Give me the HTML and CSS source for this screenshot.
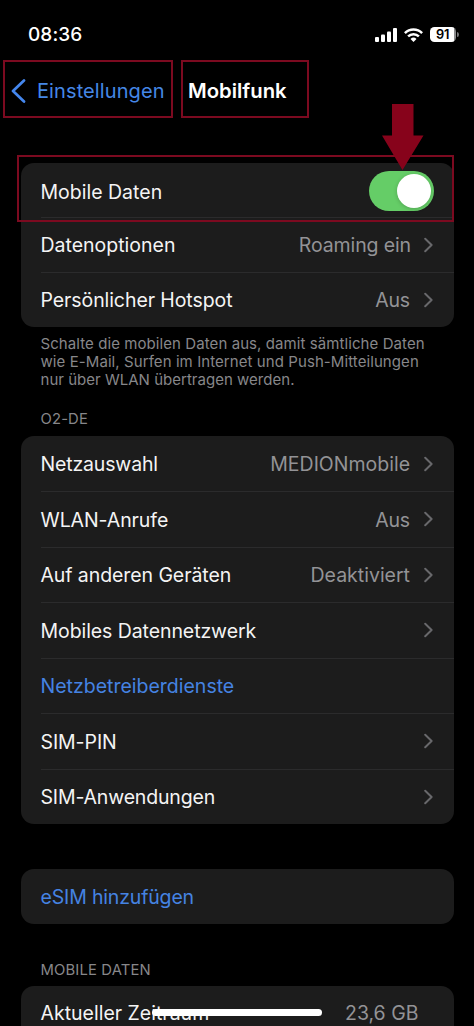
FILE: index.html
```html
<!DOCTYPE html>
<html lang="de">
<head>
<meta charset="utf-8">
<title>Mobilfunk</title>
<link rel="stylesheet" href="styles.css">
</head>
<body>
<svg class="defs" aria-hidden="true"><symbol id="chevron" viewBox="0 0 10 16"><path d="M1.200 1.800 7.600 8l-6.400 6.200" fill="none" stroke="#68686b" stroke-width="2" stroke-linecap="round" stroke-linejoin="round"/></symbol></svg>
<main class="phone">
  <header class="status">
    <span class="clock">08:36</span>
    <span class="status-icons">
      <svg class="signal" viewBox="0 0 22 14"><g fill="#fff"><rect x="0" y="9" width="4" height="5" rx="1"/><rect x="6" y="6.500" width="4" height="7.500" rx="1"/><rect x="12" y="3.500" width="4" height="10.500" rx="1"/><rect x="18" y="0" width="4" height="14" rx="1"/></g></svg>
      <svg class="wifi" viewBox="0 0 19 14"><g fill="none" stroke="#fff" stroke-width="2.500"><path d="M.9 5.100a12.200 12.200 0 0 1 17.200 0"/><path d="M4.100 8.400a7.700 7.700 0 0 1 10.800 0"/></g><path d="M6.500 10.900a4.300 4.300 0 0 1 6 0l-3 3.100z" fill="#fff"/></svg>
      <span class="battery"><span class="level">91</span><svg class="cap" viewBox="0 0 2 5"><path d="M0 0a2 2.500 0 0 1 0 5z" fill="#77777a"/></svg></span>
    </span>
  </header>
  <nav class="nav">
    <a class="mark back"><svg class="back-icon" viewBox="0 0 15 24"><path d="M13 1.500 2 12l11 10.500" fill="none" stroke="#4587ee" stroke-width="2.700" stroke-linecap="round" stroke-linejoin="round"/></svg><span>Einstellungen</span></a>
    <h1 class="mark title">Mobilfunk</h1>
  </nav>

  <section class="card first">
    <div class="row toggle"><span>Mobile Daten</span><span class="switch"><span class="knob"></span></span></div>
    <div class="row"><span>Datenoptionen</span><span class="value roaming">Roaming ein</span><svg class="chev"><use href="#chevron"/></svg></div>
    <div class="row"><span class="snug">Persönlicher Hotspot</span><span class="value off">Aus</span><svg class="chev"><use href="#chevron"/></svg></div>
    <div class="mark focus"></div>
    <svg class="arrow" viewBox="0 0 42 66"><path d="M10 0h21.500v31.500H41.500L20.500 66 0 31.500h10z" fill="#87031b"/></svg>
  </section>
  <p class="note">Schalte die mobilen Daten aus, damit sämtliche Daten<br>wie E-Mail, Surfen im Internet und Push-Mitteilungen<br><span class="note-end">nur über WLAN übertragen werden.</span></p>

  <h2 class="heading carrier">O2-DE</h2>
  <section class="card second">
    <div class="row"><span class="tight">Netzauswahl</span><span class="value">MEDIONmobile</span><svg class="chev"><use href="#chevron"/></svg></div>
    <div class="row"><span class="snug">WLAN-Anrufe</span><span class="value off">Aus</span><svg class="chev"><use href="#chevron"/></svg></div>
    <div class="row"><span class="snug">Auf anderen Geräten</span><span class="value">Deaktiviert</span><svg class="chev"><use href="#chevron"/></svg></div>
    <div class="row"><span class="snug">Mobiles Datennetzwerk</span><svg class="chev"><use href="#chevron"/></svg></div>
    <div class="row"><span class="link">Netzbetreiberdienste</span></div>
    <div class="row"><span class="snug">SIM-PIN</span><svg class="chev"><use href="#chevron"/></svg></div>
    <div class="row"><span class="tight">SIM-Anwendungen</span><svg class="chev"><use href="#chevron"/></svg></div>
  </section>

  <section class="card esim"><div class="row"><span class="link tight">eSIM hinzufügen</span></div></section>

  <h2 class="heading usage">MOBILE DATEN</h2>
  <section class="card last"><div class="row"><span>Aktueller Zeitraum</span><span class="value total">23,6 GB</span></div></section>
  <div class="home"></div>
</main>
</body>
</html>
```

FILE: styles.css
```css
* { box-sizing: border-box; }
body { margin: 0; background: #000; font-family: Inter, "Liberation Sans", sans-serif; color: #f4f4f4; }
.defs { position: absolute; width: 0; height: 0; }
.phone { position: relative; width: 474px; height: 1026px; overflow: hidden; background: #000; font-size: 19.5px; }

.status { height: 60px; padding: 9px 15px 0 28px; display: flex; align-items: center; justify-content: space-between; }
.clock { font-size: 19px; font-weight: 500; letter-spacing: .1px; color: #fff; }
.status-icons { display: flex; align-items: center; }
.signal { width: 22px; height: 14px; margin-right: 7px; }
.wifi { width: 19px; height: 14px; margin-right: 6.500px; }
.battery { display: flex; align-items: center; gap: 1px; }
.level { width: 26.500px; height: 15px; border-radius: 4.500px; background: linear-gradient(90deg, #fff 91%, #8b8b8d 91%); color: #000; font-size: 12.800px; line-height: 15px; font-weight: 600; text-align: center; }
.cap { width: 2px; height: 5px; }

.nav { height: 58px; padding-left: 3px; display: flex; gap: 8px; }
.mark { border: 2px solid #7c0a20; }
.back { width: 170px; padding: 3px 0 0 6px; display: flex; align-items: center; gap: 11px; color: #4587e6; font-size: 20px; letter-spacing: .1px; }
.back-icon { width: 15px; height: 24px; }
.title { margin: 0; width: 128px; padding: 3px 0 0 5px; display: flex; align-items: center; font-size: 20.300px; font-weight: 600; color: #fff; }

.card { position: relative; margin: 0 20.500px; border-radius: 13px; background: #1c1c1c; }
.first { margin-top: 45px; }
.row { height: 54.660px; margin-left: 20px; padding: 1px 20px 0 0; display: flex; align-items: center; white-space: nowrap; }
.row + .row { border-top: 1px solid #2b2b2c; padding-top: 0; }
.first .row + .row { height: 54.800px; }
.toggle { height: 54.400px; padding-top: 3px; }
.second .row { height: 55.500px; }
.value { margin-left: auto; color: #939396; }
.roaming { letter-spacing: -.12px; margin-right: -1px; }
.off { letter-spacing: -.15px; }
.snug { letter-spacing: -.08px; }
.tight { letter-spacing: -.16px; }
.chev { width: 10px; height: 16px; margin-left: 13.500px; margin-top: -1px; flex: none; }
.row > span:not(.value) + .chev { margin-left: auto; }
.link { color: #4583e2; }
.switch { margin-left: auto; width: 65px; height: 40px; border-radius: 20px; background: #65cd67; padding: 3px; margin-top: -1px; display: flex; justify-content: flex-end; }
.knob { width: 34px; height: 34px; border-radius: 50%; background: #fff; box-shadow: 0 1px 4px #0003; }
.focus { position: absolute; left: -3.500px; top: -8px; width: 437px; height: 67px; }
.arrow { position: absolute; left: 361.500px; top: -59.500px; width: 42px; height: 66px; }

.note { margin: 8px 0 0 40.500px; font-size: 15px; line-height: 17.800px; letter-spacing: .08px; color: #87878a; white-space: nowrap; }
.note-end { letter-spacing: .02px; }
.heading { margin: 0 0 0 40.500px; font-size: 14.800px; line-height: 18px; font-weight: 400; letter-spacing: .15px; color: #87878a; }
.carrier { margin-top: 22px; margin-bottom: 7.600px; }
.esim { margin-top: 45px; }
.usage { margin-top: 37px; margin-bottom: 7px; }
.total { margin-right: 15px; }
.last .row { height: 53px; padding-top: 0; }
.home { position: absolute; left: 152px; top: 1009px; width: 170px; height: 7px; border-radius: 4px; background: #fff; }
```
